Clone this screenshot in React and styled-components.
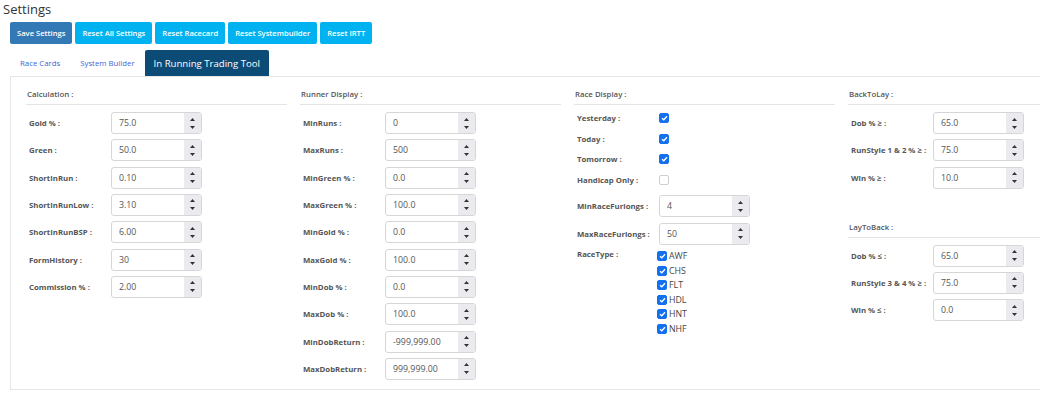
import React from "react";
import styled, { createGlobalStyle } from "styled-components";

const GlobalStyle = createGlobalStyle`
  html, body { margin: 0; padding: 0; background: #fff; overflow: hidden; }
  body { font-family: "Open Sans", "Liberation Sans", sans-serif; color: #333; }
  * { box-sizing: border-box; }
`;

const Page = styled.div`
  width: 1040px;
  height: 396px;
  overflow: hidden;
`;

const Title = styled.h1`
  margin: 0;
  padding-left: 3px;
  height: 22px;
  line-height: 18px;
  font-size: 13px;
  font-weight: 400;
  color: #333;
`;

const ButtonBar = styled.div`
  display: flex;
  gap: 3px;
  margin-left: 10px;
`;

const Button = styled.button`
  height: 22px;
  padding: 0 7px;
  border: none;
  border-radius: 2px;
  font-family: inherit;
  font-size: 7.6px;
  font-weight: 600;
  color: #fff;
  background: ${(p) => (p.$primary ? "#3379b5" : "#00b3f0")};
  cursor: pointer;
`;

const Tabs = styled.div`
  display: flex;
  margin: 6px 0 0 10px;
  height: 26px;
`;

const Tab = styled.div`
  display: flex;
  align-items: center;
  padding: 0 ${(p) => (p.$active ? "9px" : "10px")};
  font-size: ${(p) => (p.$active ? "9.6px" : "7.8px")};
  color: ${(p) => (p.$active ? "#fff" : "#3d66d6")};
  background: ${(p) => (p.$active ? "#0d4b77" : "transparent")};
  border-radius: ${(p) => (p.$active ? "2px 2px 0 0" : "0")};
`;

const Panel = styled.div`
  margin-left: 10px;
  width: 1200px;
  height: 314px;
  border: 1px solid #e6e6e6;
  padding: 10px 0 0 15px;
  display: grid;
  grid-template-columns: repeat(4, 261px);
  column-gap: 13px;
  align-items: start;
`;

const Column = styled.div`
  display: flex;
  flex-direction: column;
`;

const Heading = styled.div`
  margin-top: ${(p) => p.$top || 0}px;
  padding: 0 0 3px 1px;
  line-height: 14px;
  font-size: 7.8px;
  font-weight: 600;
  color: #555;
  border-bottom: 1px solid #e4e4e4;
`;

const Fields = styled.div`
  display: flex;
  flex-direction: column;
  gap: 5.33px;
  margin-top: ${(p) => (p.$top != null ? p.$top : 7)}px;
`;

const Row = styled.div`
  display: flex;
  align-items: center;
  height: ${(p) => p.$h || 22}px;
`;

const Label = styled.div`
  width: 85px;
  flex: none;
  padding-left: 3px;
  font-size: 7.8px;
  font-weight: 700;
  color: #555;
  white-space: nowrap;
`;

const InputBox = styled.div`
  width: 91px;
  height: 22px;
  display: flex;
  border: 1px solid #d6d6d6;
  border-radius: 3px;
  overflow: hidden;
  background: #fff;
`;

const Value = styled.div`
  flex: 1;
  display: flex;
  align-items: center;
  padding-left: 7px;
  font-size: 8.8px;
  color: #555;
`;

const Spin = styled.div`
  width: 17px;
  background: #ebebef;
  display: flex;
  flex-direction: column;
  align-items: center;
  justify-content: center;
  gap: 5px;
`;

const Check = styled.div`
  width: 10px;
  height: 10px;
  border-radius: 2px;
  flex: none;
  display: flex;
  align-items: center;
  justify-content: center;
  background: ${(p) => (p.$on ? "#1370ef" : "#fff")};
  border: 1px solid ${(p) => (p.$on ? "#1370ef" : "#cfcfcf")};
`;

const TypeBlock = styled.div`
  display: flex;
  align-items: flex-start;
  margin-top: 4px;
`;

const TypeList = styled.div`
  display: flex;
  flex-direction: column;
  margin-left: -2px;
`;

const TypeItem = styled.div`
  display: flex;
  align-items: center;
  gap: 2px;
  height: 14.6px;
  font-size: 8.8px;
  color: #444;
`;

const Spinner = () => (
  <Spin>
    <svg width="5" height="3" viewBox="0 0 5 3"><path d="M0 3 L2.5 0 L5 3 Z" fill="#333" /></svg>
    <svg width="5" height="3" viewBox="0 0 5 3"><path d="M0 0 L2.5 3 L5 0 Z" fill="#333" /></svg>
  </Spin>
);

const NumberInput = ({ value }) => (
  <InputBox>
    <Value>{value}</Value>
    <Spinner />
  </InputBox>
);

const CheckBox = ({ on }) => (
  <Check $on={on}>
    {on && (
      <svg width="7" height="6" viewBox="0 0 7 6">
        <path d="M1 3.2 L2.8 4.8 L6 1.2" stroke="#fff" strokeWidth="1.3" fill="none" />
      </svg>
    )}
  </Check>
);

const Field = ({ label, value }) => (
  <Row>
    <Label>{label}</Label>
    <NumberInput value={value} />
  </Row>
);

const calculation = [
  ["Gold % :", "75.0"],
  ["Green :", "50.0"],
  ["ShortInRun :", "0.10"],
  ["ShortInRunLow :", "3.10"],
  ["ShortInRunBSP :", "6.00"],
  ["FormHistory :", "30"],
  ["Commission % :", "2.00"],
];

const runner = [
  ["MinRuns :", "0"],
  ["MaxRuns :", "500"],
  ["MinGreen % :", "0.0"],
  ["MaxGreen % :", "100.0"],
  ["MinGold % :", "0.0"],
  ["MaxGold % :", "100.0"],
  ["MinDob % :", "0.0"],
  ["MaxDob % :", "100.0"],
  ["MinDobReturn :", "-999,999.00"],
  ["MaxDobReturn :", "999,999.00"],
];

const backToLay = [
  ["Dob % \u2265 :", "65.0"],
  ["RunStyle 1 & 2 % \u2265 :", "75.0"],
  ["Win % \u2265 :", "10.0"],
];

const layToBack = [
  ["Dob % \u2264 :", "65.0"],
  ["RunStyle 3 & 4 % \u2265 :", "75.0"],
  ["Win % \u2264 :", "0.0"],
];

const days = [
  ["Yesterday :", true],
  ["Today :", true],
  ["Tomorrow :", true],
  ["Handicap Only :", false],
];

const raceTypes = ["AWF", "CHS", "FLT", "HDL", "HNT", "NHF"];

export default function App() {
  return (
    <Page>
      <GlobalStyle />
      <Title>Settings</Title>
      <ButtonBar>
        <Button $primary>Save Settings</Button>
        <Button>Reset All Settings</Button>
        <Button>Reset Racecard</Button>
        <Button>Reset Systembuilder</Button>
        <Button>Reset IRTT</Button>
      </ButtonBar>
      <Tabs>
        <Tab>Race Cards</Tab>
        <Tab>System Builder</Tab>
        <Tab $active>In Running Trading Tool</Tab>
      </Tabs>
      <Panel>
        <Column>
          <Heading>Calculation :</Heading>
          <Fields>
            {calculation.map(([l, v]) => (
              <Field key={l} label={l} value={v} />
            ))}
          </Fields>
        </Column>
        <Column>
          <Heading>Runner Display :</Heading>
          <Fields>
            {runner.map(([l, v]) => (
              <Field key={l} label={l} value={v} />
            ))}
          </Fields>
        </Column>
        <Column>
          <Heading>Race Display :</Heading>
          <Fields $top={3}>
            <div>
              {days.map(([l, on]) => (
                <Row key={l} $h={20.5}>
                  <Label>{l}</Label>
                  <CheckBox on={on} />
                </Row>
              ))}
            </div>
            <Row>
              <Label>MinRaceFurlongs :</Label>
              <NumberInput value="4" />
            </Row>
            <Row>
              <Label>MaxRaceFurlongs :</Label>
              <NumberInput value="50" />
            </Row>
          </Fields>
          <TypeBlock>
            <Label>RaceType :</Label>
            <TypeList>
              {raceTypes.map((t) => (
                <TypeItem key={t}>
                  <CheckBox on />
                  {t}
                </TypeItem>
              ))}
            </TypeList>
          </TypeBlock>
        </Column>
        <Column>
          <Heading>BackToLay :</Heading>
          <Fields>
            {backToLay.map(([l, v]) => (
              <Field key={l} label={l} value={v} />
            ))}
          </Fields>
          <Heading $top={31}>LayToBack :</Heading>
          <Fields>
            {layToBack.map(([l, v]) => (
              <Field key={l} label={l} value={v} />
            ))}
          </Fields>
        </Column>
      </Panel>
    </Page>
  );
}
